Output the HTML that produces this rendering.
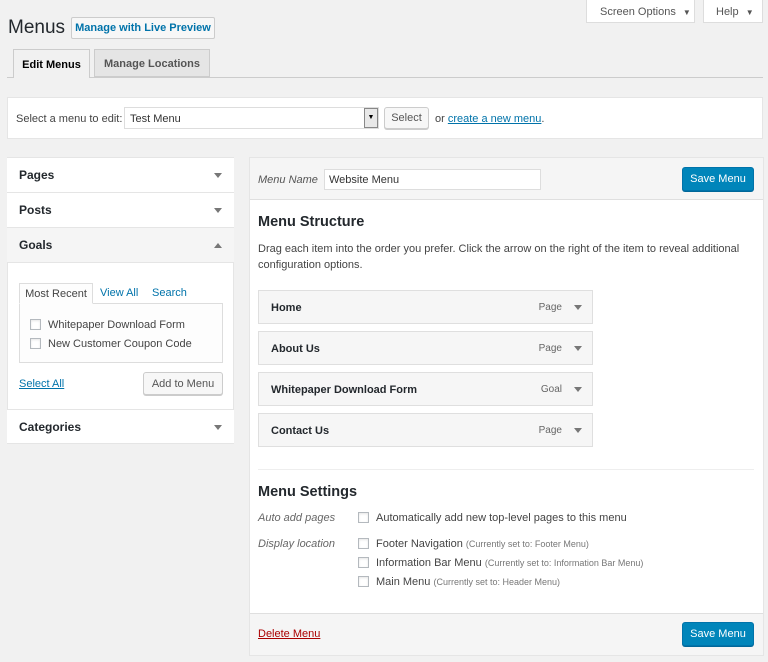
<!DOCTYPE html><html><head><style>
*{box-sizing:border-box;margin:0;padding:0}
body{width:768px;height:662px;background:#f1f1f1;font-family:"Liberation Sans",sans-serif;font-size:11px;color:#444;position:relative;overflow:hidden}
.a{position:absolute}
.btn{position:absolute;border:1px solid #ccc;background:#f7f7f7;border-radius:3px;box-shadow:0 1px 0 #ccc;color:#555;font-size:11px;text-align:center}
.blue{position:absolute;background:#0085ba;border:1px solid #0073aa;border-radius:3px;color:#fff;font-size:11px;text-align:center;box-shadow:0 1px 0 #006799;line-height:24px}
.cb{position:absolute;width:11px;height:11px;border:1px solid #b4b9be;background:#fff;box-shadow:inset 0 1px 2px rgba(0,0,0,.1)}
.sec{position:absolute;left:7px;width:227px;background:#fff;border-bottom:1px solid #e5e5e5;font-weight:bold;font-size:12px;color:#23282d;padding-left:12px}
.tri{position:absolute;right:12px;width:0;height:0;border-left:4px solid transparent;border-right:4px solid transparent;border-top:5px solid #777}
.item{position:absolute;left:258px;width:335px;height:34px;background:#f6f6f6;border:1px solid #dfdfdf;font-weight:bold;font-size:11px;color:#23282d;padding:11px 12px}
.item span{position:absolute;right:30px;top:11px;font-weight:normal;color:#666;font-size:10px}
.item i{position:absolute;right:10px;top:14px;border-left:4px solid transparent;border-right:4px solid transparent;border-top:5px solid #777}
a{color:#0073aa}
</style></head><body>
<div class="a" style="left:586px;top:-1px;width:109px;height:24px;background:#fff;border:1px solid #ddd;border-top:0;font-size:11px;color:#555;padding:7px 0 0 13px">Screen Options <span style="font-size:8px;margin-left:4px">▼</span></div>
<div class="a" style="left:703px;top:-1px;width:60px;height:24px;background:#fff;border:1px solid #ddd;border-top:0;font-size:11px;color:#555;padding:7px 0 0 12px">Help <span style="font-size:8px;margin-left:4px">▼</span></div>
<div class="a" style="left:8px;top:17px;font-size:19px;color:#23282d">Menus</div>
<div class="a" style="left:71px;top:17px;width:144px;height:22px;border:1px solid #ccc;background:#f7f7f7;border-radius:2px;color:#0073aa;font-weight:bold;font-size:11px;line-height:21px;text-align:center">Manage with Live Preview</div>
<div class="a" style="left:7px;top:77px;width:756px;height:1px;background:#ccc"></div>
<div class="a" style="left:13px;top:49px;width:77px;height:29px;background:#f1f1f1;border:1px solid #ccc;border-bottom:0;font-weight:bold;font-size:11px;color:#000;text-align:center;line-height:30px">Edit Menus</div>
<div class="a" style="left:94px;top:49px;width:116px;height:28px;background:#e5e5e5;border:1px solid #ccc;font-weight:bold;font-size:11px;color:#555;text-align:center;line-height:29px">Manage Locations</div>
<div class="a" style="left:7px;top:97px;width:756px;height:42px;background:#fff;border:1px solid #e5e5e5"></div>
<div class="a" style="left:16px;top:113px;font-size:11px">Select a menu to edit:</div>
<div class="a" style="left:124px;top:107px;width:255px;height:22px;background:#fff;border:1px solid #ddd;padding:5px 5px;font-size:11px;color:#333">Test Menu<div class="a" style="right:0;top:0;width:14px;height:20px;border:1px solid #888;background:#e8e8e8;font-size:7px;text-align:center;line-height:18px;color:#000">▼</div></div>
<div class="btn" style="left:384px;top:107px;width:45px;height:22px;line-height:21px">Select</div>
<div class="a" style="left:435px;top:113px">or <a href="#">create a new menu</a>.</div>

<div class="a" style="left:7px;top:157px;width:227px;height:287px;border:1px solid #e5e5e5;background:#fff"></div>
<div class="sec" style="top:158px;height:35px;line-height:35px">Pages<div class="tri" style="top:15px"></div></div>
<div class="sec" style="top:193px;height:35px;line-height:35px">Posts<div class="tri" style="top:15px"></div></div>
<div class="sec" style="top:228px;height:35px;line-height:35px;background:#f5f5f5">Goals<div class="tri" style="top:15px;border-top:0;border-bottom:5px solid #777"></div></div>
<div class="a" style="left:19px;top:303px;width:204px;height:60px;border:1px solid #ddd;background:#fdfdfd"></div>
<div class="a" style="left:19px;top:283px;width:74px;height:21px;border:1px solid #ddd;border-bottom:1px solid #fdfdfd;background:#fdfdfd;text-align:center;line-height:20px">Most Recent</div>
<div class="a" style="left:100px;top:287px;color:#0073aa">View All</div>
<div class="a" style="left:152px;top:287px;color:#0073aa">Search</div>
<div class="cb" style="left:30px;top:319px"></div><div class="a" style="left:48px;top:319px">Whitepaper Download Form</div>
<div class="cb" style="left:30px;top:338px"></div><div class="a" style="left:48px;top:338px">New Customer Coupon Code</div>
<a class="a" href="#" style="left:19px;top:378px">Select All</a>
<div class="btn" style="left:143px;top:372px;width:80px;height:23px;line-height:22px">Add to Menu</div>
<div class="sec" style="top:409px;height:35px;line-height:35px;border-top:1px solid #e5e5e5">Categories<div class="tri" style="top:15px"></div></div>

<div class="a" style="left:249px;top:157px;width:515px;height:499px;border:1px solid #e5e5e5;background:#fff"></div>
<div class="a" style="left:250px;top:158px;width:513px;height:42px;background:#f5f5f5;border-bottom:1px solid #dfdfdf"></div>
<div class="a" style="left:258px;top:174px;font-style:italic;color:#555">Menu Name</div>
<div class="a" style="left:324px;top:169px;width:217px;height:21px;border:1px solid #ddd;background:#fff;padding:4px;color:#333">Website Menu</div>
<div class="blue" style="left:682px;top:167px;width:72px;height:24px;line-height:23px">Save Menu</div>
<div class="a" style="left:258px;top:214px;font-size:14.5px;font-weight:bold;color:#23282d">Menu Structure</div>
<div class="a" style="left:258px;top:241px;width:490px;line-height:16px">Drag each item into the order you prefer. Click the arrow on the right of the item to reveal additional configuration options.</div>
<div class="item" style="top:290px">Home<span>Page</span><i></i></div>
<div class="item" style="top:331px">About Us<span>Page</span><i></i></div>
<div class="item" style="top:372px">Whitepaper Download Form<span>Goal</span><i></i></div>
<div class="item" style="top:413px">Contact Us<span>Page</span><i></i></div>
<div class="a" style="left:258px;top:469px;width:496px;height:1px;background:#eee"></div>
<div class="a" style="left:258px;top:484px;font-size:14.5px;font-weight:bold;color:#23282d">Menu Settings</div>
<div class="a" style="left:258px;top:512px;font-style:italic;color:#666">Auto add pages</div>
<div class="cb" style="left:358px;top:512px"></div><div class="a" style="left:376px;top:512px">Automatically add new top-level pages to this menu</div>
<div class="a" style="left:258px;top:538px;font-style:italic;color:#666">Display location</div>
<div class="cb" style="left:358px;top:538px"></div><div class="a" style="left:376px;top:538px">Footer Navigation <span style="font-size:9px;color:#777">(Currently set to: Footer Menu)</span></div>
<div class="cb" style="left:358px;top:557px"></div><div class="a" style="left:376px;top:557px">Information Bar Menu <span style="font-size:9px;color:#777">(Currently set to: Information Bar Menu)</span></div>
<div class="cb" style="left:358px;top:576px"></div><div class="a" style="left:376px;top:576px">Main Menu <span style="font-size:9px;color:#777">(Currently set to: Header Menu)</span></div>
<div class="a" style="left:250px;top:613px;width:513px;height:42px;background:#f5f5f5;border-top:1px solid #dfdfdf"></div>
<a class="a" href="#" style="left:258px;top:628px;color:#a00">Delete Menu</a>
<div class="blue" style="left:682px;top:622px;width:72px;height:24px;line-height:23px">Save Menu</div>
</body></html>
